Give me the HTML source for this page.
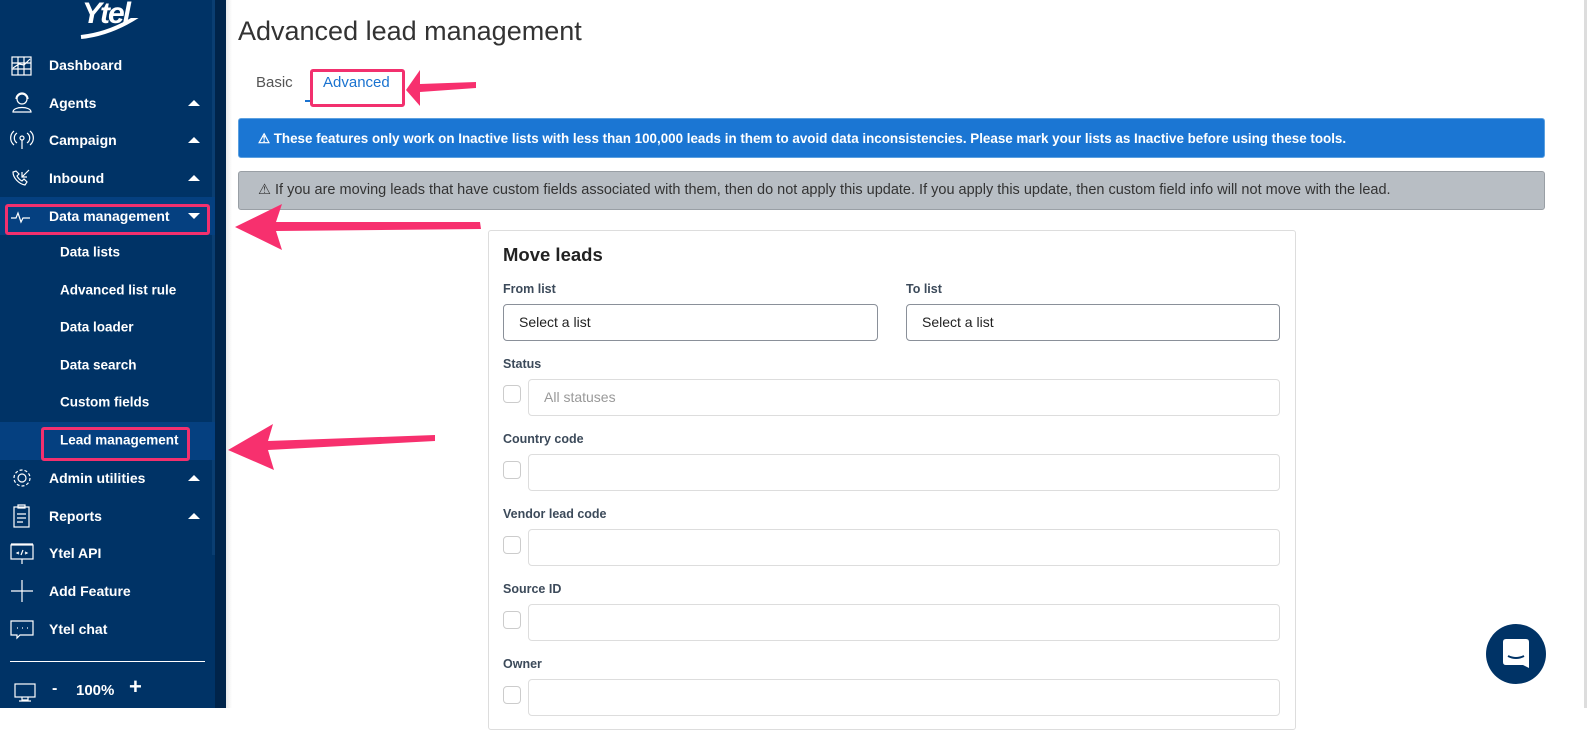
<!DOCTYPE html>
<html><head><meta charset="utf-8"><style>
*{box-sizing:border-box;margin:0;padding:0}
body{width:1587px;height:708px;overflow:hidden;background:#fff;font-family:"Liberation Sans",sans-serif;position:relative}
.sb{position:absolute;left:0;top:0;width:215px;height:708px;background:#003366}
.sbs{position:absolute;left:215px;top:0;width:11px;height:708px;background:#00244a}
.sbs2{position:absolute;left:226px;top:0;width:6px;height:708px;background:linear-gradient(90deg,#e8e8e8,#fff)}
.it{position:absolute;left:49px;color:#fff;font-size:14px;font-weight:bold;transform:translateY(-50%)}
.sub{left:60px;font-size:13.5px}
.tri{position:absolute;left:188px;width:0;height:0;border-left:6px solid transparent;border-right:6px solid transparent;border-bottom:6px solid #fff}
.band{position:absolute;left:0;width:215px;background:#054080}
.pb{position:absolute;border:3.5px solid #f2306e;border-radius:3px}
.abs{position:absolute}
.lbl{position:absolute;font-size:12.5px;font-weight:bold;color:#3c4a5a}
.inp{position:absolute;border:1px solid #ddd;border-radius:4px;height:37px;font-size:14px;color:#222;padding:9px 15px}
.cb{position:absolute;left:503px;width:18px;height:18px;border:1px solid #ccc;border-radius:4px}
</style></head><body>
<div class="sb"></div><div class="sbs"></div><div class="sbs2"></div>
<div class="abs" style="left:212px;top:0;width:3px;height:555px;background:#0a3e72"></div>
<div class="band" style="top:197px;height:38px"></div>
<div class="band" style="top:422px;height:38px"></div>
<div class="abs" style="left:82px;top:-2px;color:#fff;font-size:30px;font-weight:bold;font-style:italic;letter-spacing:-2px;line-height:32px">Ytel</div>
<svg class="abs" style="left:78px;top:18px" width="64" height="22"><path d="M3 19 Q32 16 60 -2" stroke="#fff" stroke-width="4" fill="none"/></svg>
<div class="it" style="top:65px">Dashboard</div>
<div class="it" style="top:103px">Agents</div><div class="tri" style="top:100px"></div>
<div class="it" style="top:140px">Campaign</div><div class="tri" style="top:137px"></div>
<div class="it" style="top:178px">Inbound</div><div class="tri" style="top:175px"></div>
<div class="it" style="top:216px">Data management</div>
<div class="abs" style="left:188px;top:213px;border-left:6px solid transparent;border-right:6px solid transparent;border-top:6px solid #fff"></div>
<div class="it sub" style="top:252px">Data lists</div>
<div class="it sub" style="top:290px">Advanced list rule</div>
<div class="it sub" style="top:327px">Data loader</div>
<div class="it sub" style="top:365px">Data search</div>
<div class="it sub" style="top:402px">Custom fields</div>
<div class="it sub" style="top:440px">Lead management</div>
<div class="it" style="top:478px">Admin utilities</div><div class="tri" style="top:475px"></div>
<div class="it" style="top:516px">Reports</div><div class="tri" style="top:513px"></div>
<div class="it" style="top:553px">Ytel API</div>
<div class="it" style="top:591px">Add Feature</div>
<div class="it" style="top:629px">Ytel chat</div>
<svg class="abs" style="left:0;top:0" width="45" height="708" fill="none" stroke="#fff" stroke-width="1.2">
<rect x="12" y="57" width="19" height="18"/><path d="M12 63h19M12 69h19M18 57v18M24 57v18M13 68l6-4 5 1 6-6"/>
<circle cx="22" cy="99" r="5"/><path d="M13 112c0-6 18-6 18 0z M16 99a6 6 0 0 1 12 0"/>
<circle cx="22" cy="138" r="2"/><path d="M22 140v9M17 133a6 6 0 0 0 0 10M27 133a6 6 0 0 1 0 10M14 131a9 9 0 0 0 0 14M30 131a9 9 0 0 1 0 14"/>
<path d="M13 172c0 6 6 12 12 13l2-3-3-3-2 2c-2-1-4-3-5-5l2-2-3-3z M22 177l7-7M22 172v5h5"/>
<path d="M11 218h5l2-5 3 9 2-4h7"/>
<circle cx="22" cy="478" r="4"/><circle cx="22" cy="478" r="8" stroke-dasharray="3 2"/>
<rect x="14" y="507" width="15" height="20"/><path d="M18 505h7v3h-7z M17 514h9M17 518h9M17 522h6"/>
<rect x="11" y="545" width="22" height="14"/><path d="M11 544h22M22 559v5M19 552l-2 1 2 1M25 552l2 1-2 1M23 550l-2 5"/>
<path d="M22 580v22M11 591h22"/>
<path d="M11 621h22v14h-13l-3 3v-3h-6z"/><path d="M17 628h1M22 628h1M27 628h1"/>
<rect x="15" y="684" width="20" height="13"/><path d="M22 697v3h6v-3M19 701h12"/>
</svg>
<div class="abs" style="left:10px;top:661px;width:195px;height:1px;background:#fff"></div>
<div class="abs" style="left:52px;top:680px;color:#fff;font-size:16px;font-weight:bold">-</div>
<div class="abs" style="left:76px;top:682px;color:#fff;font-size:15px;font-weight:bold">100%</div>
<div class="abs" style="left:129px;top:674px;color:#fff;font-size:22px;font-weight:bold">+</div>
<div class="pb" style="left:5px;top:204px;width:205px;height:31px"></div>
<div class="pb" style="left:41px;top:427px;width:149px;height:34px"></div>

<div class="abs" style="left:238px;top:16px;font-size:27px;color:#333">Advanced lead management</div>
<div class="abs" style="left:256px;top:74px;font-size:15px;color:#555">Basic</div>
<div class="abs" style="left:323px;top:74px;font-size:15px;color:#1a73d0">Advanced</div>
<div class="abs" style="left:305px;top:100px;width:8px;height:2px;background:#1a73d0"></div>
<div class="pb" style="left:310px;top:69px;width:95px;height:38px"></div>

<div class="abs" style="left:238px;top:118px;width:1307px;height:40px;background:#1b76d3;border:1px solid #5ba0e0;border-radius:3px;color:#fff;font-size:13.4px;font-weight:bold;padding:12px 0 0 19px;white-space:nowrap">⚠ These features only work on Inactive lists with less than 100,000 leads in them to avoid data inconsistencies. Please mark your lists as Inactive before using these tools.</div>
<div class="abs" style="left:238px;top:171px;width:1307px;height:39px;background:#b8bec4;border:1px solid #999fa5;border-radius:3px;color:#333;font-size:14.5px;padding:10px 0 0 19px;white-space:nowrap">⚠ If you are moving leads that have custom fields associated with them, then do not apply this update. If you apply this update, then custom field info will not move with the lead.</div>

<div class="abs" style="left:488px;top:230px;width:808px;height:500px;border:1px solid #ddd;border-radius:3px"></div>
<div class="abs" style="left:503px;top:244px;font-size:18.5px;font-weight:bold;color:#222">Move leads</div>
<div class="lbl" style="left:503px;top:282px">From list</div>
<div class="lbl" style="left:906px;top:282px">To list</div>
<div class="inp" style="left:503px;top:304px;width:375px;border-color:#8a9099">Select a list</div>
<div class="inp" style="left:906px;top:304px;width:374px;border-color:#8a9099">Select a list</div>
<div class="lbl" style="left:503px;top:357px">Status</div>
<div class="cb" style="top:385px"></div>
<div class="inp" style="left:528px;top:379px;width:752px;color:#999">All statuses</div>
<div class="lbl" style="left:503px;top:432px">Country code</div>
<div class="cb" style="top:461px"></div><div class="inp" style="left:528px;top:454px;width:752px"></div>
<div class="lbl" style="left:503px;top:507px">Vendor lead code</div>
<div class="cb" style="top:536px"></div><div class="inp" style="left:528px;top:529px;width:752px"></div>
<div class="lbl" style="left:503px;top:582px">Source ID</div>
<div class="cb" style="top:611px"></div><div class="inp" style="left:528px;top:604px;width:752px"></div>
<div class="lbl" style="left:503px;top:657px">Owner</div>
<div class="cb" style="top:686px"></div><div class="inp" style="left:528px;top:679px;width:752px"></div>

<div class="abs" style="left:1584px;top:0;width:3px;height:708px;background:#ddd"></div>
<div class="abs" style="left:1486px;top:624px;width:60px;height:60px;border-radius:50%;background:#003366"></div>
<svg class="abs" style="left:1486px;top:624px" width="60" height="60"><path d="M17 18q0-3 3-3h20q3 0 3 3v26l-6-3h-17q-3 0-3-3z" fill="#fff"/><path d="M22 32q8 4 16 0" stroke="#003366" stroke-width="2" fill="none"/></svg>

<svg class="abs" style="left:0;top:0" width="1587" height="708">
<g fill="#f7306e">
<polygon points="235,227 282,204 276,222 480,222 481,229 276,231 282,250"/>
<polygon points="228,450 273,424 268,441 435,435 435,441 268,450 274,470"/>
<polygon points="406,90 420,70 420,84 476,82 476,88 420,92 420,106"/>
</g></svg>
</body></html>
